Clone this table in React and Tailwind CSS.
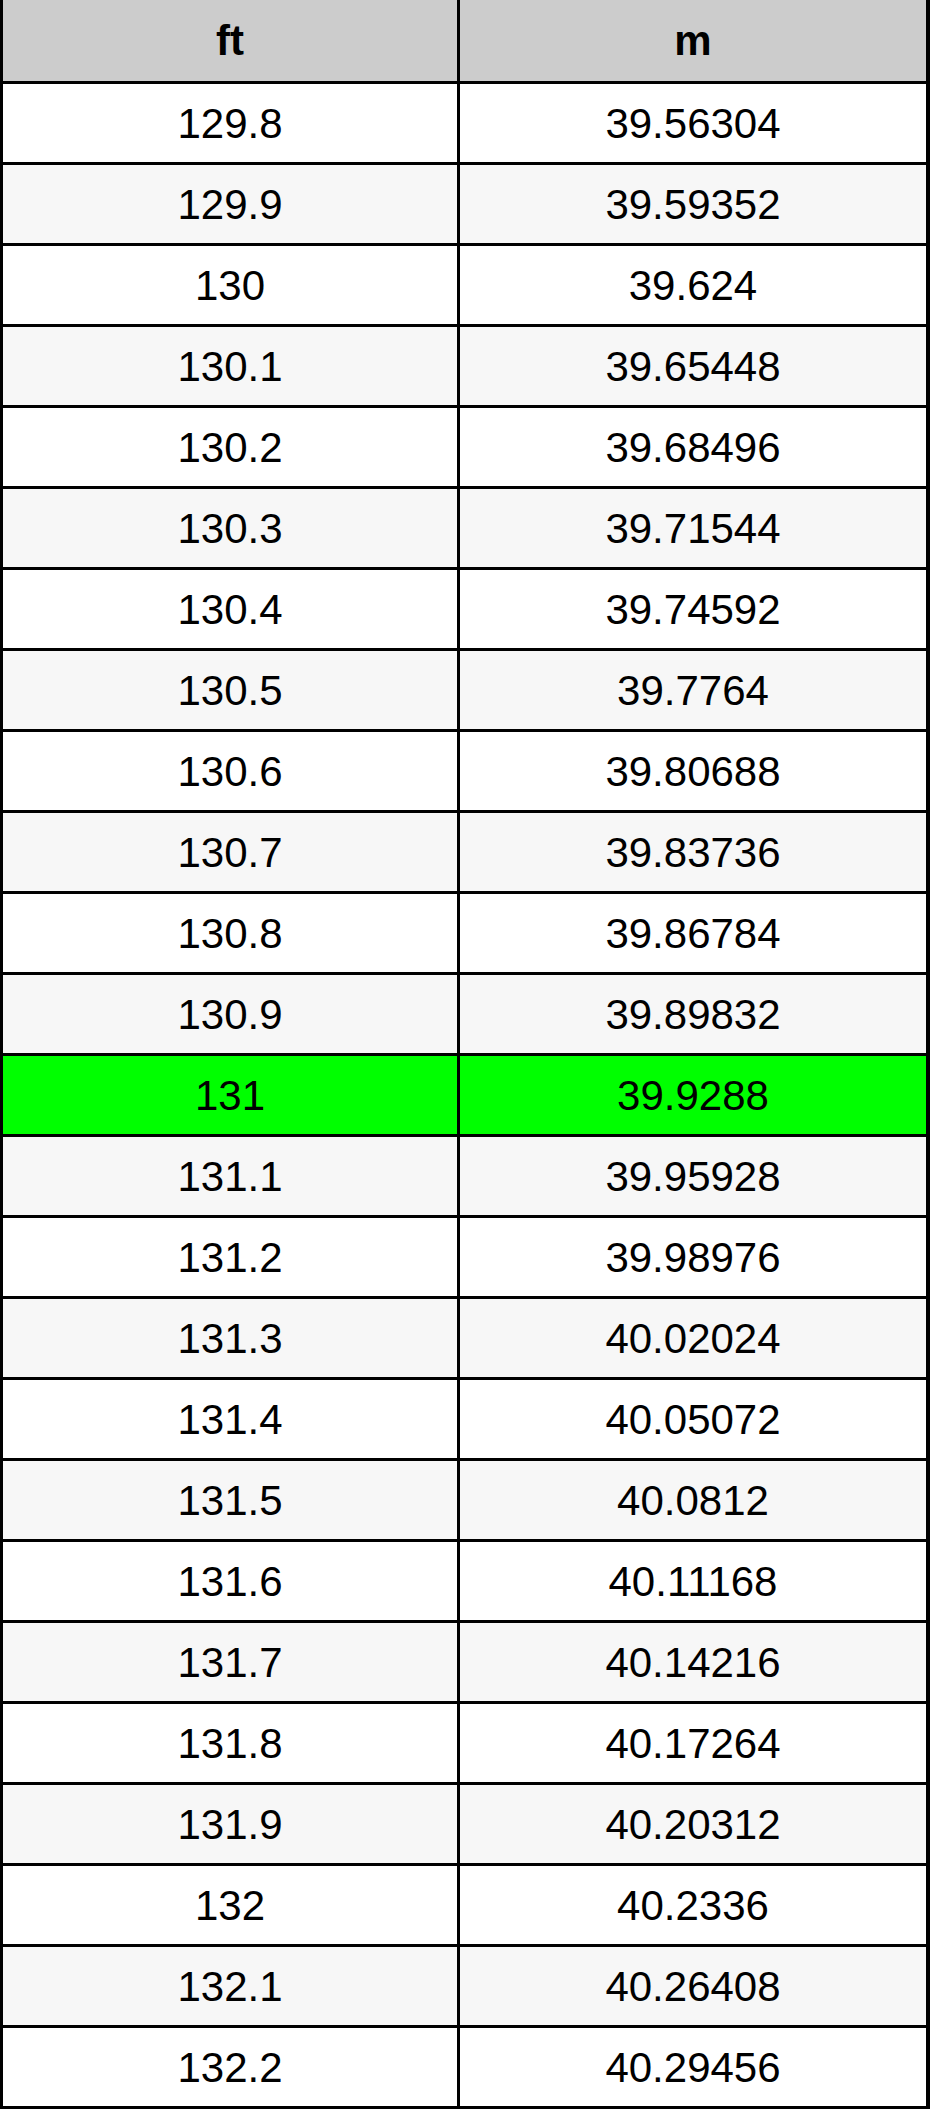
import React from "react";

const rows = [
  ["129.8", "39.56304"],
  ["129.9", "39.59352"],
  ["130", "39.624"],
  ["130.1", "39.65448"],
  ["130.2", "39.68496"],
  ["130.3", "39.71544"],
  ["130.4", "39.74592"],
  ["130.5", "39.7764"],
  ["130.6", "39.80688"],
  ["130.7", "39.83736"],
  ["130.8", "39.86784"],
  ["130.9", "39.89832"],
  ["131", "39.9288"],
  ["131.1", "39.95928"],
  ["131.2", "39.98976"],
  ["131.3", "40.02024"],
  ["131.4", "40.05072"],
  ["131.5", "40.0812"],
  ["131.6", "40.11168"],
  ["131.7", "40.14216"],
  ["131.8", "40.17264"],
  ["131.9", "40.20312"],
  ["132", "40.2336"],
  ["132.1", "40.26408"],
  ["132.2", "40.29456"],
];

export default function App() {
  return (
    <div
      className="w-[930px] h-[2115px] bg-white text-black"
      style={{ fontFamily: '"Liberation Sans", Arial, Helvetica, sans-serif' }}
    >
      <div className="w-[930px] border-l-[3px] border-r-[4px] border-black flex flex-col">
        <div className="flex h-[84px] border-b-[3px] border-black bg-[#cccccc] text-[42px] font-bold">
          <div className="w-[457px] flex items-center justify-center border-r-[3px] border-black">ft</div>
          <div className="flex-1 flex items-center justify-center">m</div>
        </div>
        {rows.map(([a, b], i) => {
          const hl = a === "131";
          const bg = hl ? "bg-[#00ff00]" : i % 2 === 1 ? "bg-[#f7f7f7]" : "bg-white";
          return (
            <div key={a} className={`flex h-[81px] border-b-[3px] border-black text-[42px] ${bg}`}>
              <div className="w-[457px] flex items-center justify-center border-r-[3px] border-black">{a}</div>
              <div className="flex-1 flex items-center justify-center">{b}</div>
            </div>
          );
        })}
      </div>
    </div>
  );
}
